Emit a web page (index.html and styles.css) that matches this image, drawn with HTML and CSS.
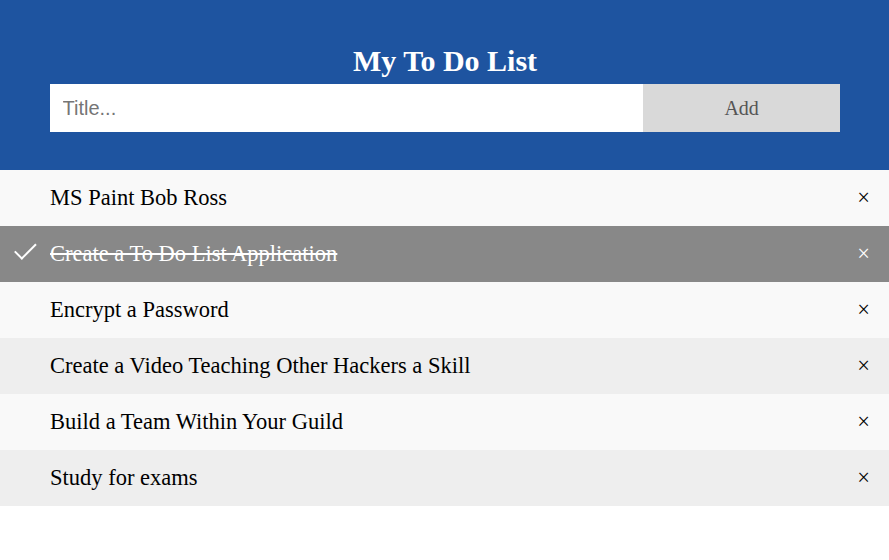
FILE: index.html
```html
<!DOCTYPE html>
<html>
<head>
<meta charset="utf-8">
<link rel="stylesheet" href="styles.css">
</head>
<body>
<div class="header">
  <h2 class="title">My To Do List</h2>
  <div class="form">
    <input class="field" type="text" placeholder="Title...">
    <span class="add-btn">Add</span>
  </div>
</div>
<ul class="list">
  <li class="item">MS Paint Bob Ross<span class="close">×</span></li>
  <li class="item checked">Create a To Do List Application<span class="close">×</span></li>
  <li class="item">Encrypt a Password<span class="close">×</span></li>
  <li class="item">Create a Video Teaching Other Hackers a Skill<span class="close">×</span></li>
  <li class="item">Build a Team Within Your Guild<span class="close">×</span></li>
  <li class="item">Study for exams<span class="close">×</span></li>
</ul>
</body>
</html>
```
FILE: styles.css
```css
* { box-sizing: border-box; }
body {
  margin: 0;
  font-family: "Liberation Serif", "Times New Roman", serif;
  background: #fff;
}
.header {
  background-color: #1e54a0;
  padding: 37.5px 49px 37.5px 50px;
  color: #fff;
  text-align: center;
}
.title {
  margin: 6.25px;
  font-size: 30px;
  font-weight: bold;
}
.form {
  display: flex;
}
.field {
  margin: 0;
  border: none;
  border-radius: 0;
  width: 75.1%;
  padding: 12.5px;
  font-size: 20px;
  font-family: "Liberation Sans", Arial, sans-serif;
  outline: none;
}
.field::placeholder { color: #757575; }
.add-btn {
  padding: 12.5px;
  width: 24.9%;
  background: #d9d9d9;
  color: #555;
  text-align: center;
  font-size: 20px;
}
.list {
  margin: 0;
  padding: 0;
}
.item {
  position: relative;
  padding: 15px 10px 15px 50px;
  list-style-type: none;
  background: #eee;
  font-size: 22.5px;
  color: #000;
}
.item:nth-child(odd) { background: #f9f9f9; }
.item.checked {
  background: #888;
  color: #fff;
  text-decoration: line-through;
}
.item.checked::before {
  content: '';
  position: absolute;
  border-color: #fff;
  border-style: solid;
  border-width: 0 2.5px 2.5px 0;
  top: 12.5px;
  left: 20px;
  transform: rotate(45deg);
  height: 18.75px;
  width: 8.75px;
}
.close {
  position: absolute;
  right: 0;
  top: 0;
  padding: 15px 19px 15px 20px;
  text-decoration: none;
}
```
